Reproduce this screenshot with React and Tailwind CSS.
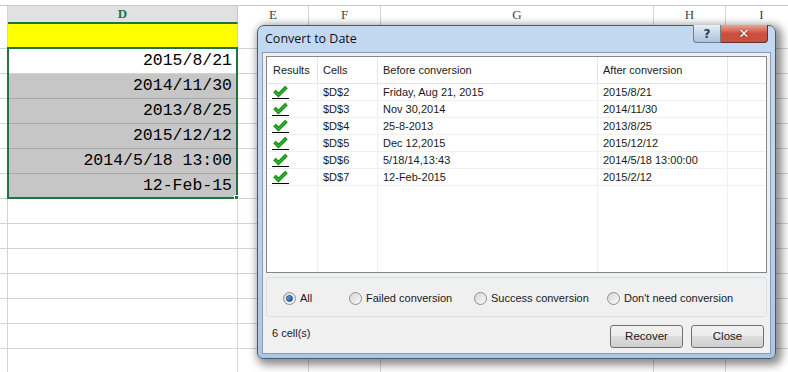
import React from "react";

const cols = [
  { w: "w-[8px]", key: "rh" },
  { w: "w-[230px]", key: "D" },
  { w: "w-[71px]", key: "E" },
  { w: "w-[72px]", key: "F" },
  { w: "w-[273px]", key: "G" },
  { w: "w-[72px]", key: "H" },
  { w: "w-[72px]", key: "I" },
];

const dVals = [
  null,
  "2015/8/21",
  "2014/11/30",
  "2013/8/25",
  "2015/12/12",
  "2014/5/18 13:00",
  "12-Feb-15",
];

const listRows = [
  ["$D$2", "Friday, Aug 21, 2015", "2015/8/21"],
  ["$D$3", "Nov 30,2014", "2014/11/30"],
  ["$D$4", "25-8-2013", "2013/8/25"],
  ["$D$5", "Dec 12,2015", "2015/12/12"],
  ["$D$6", "5/18/14,13:43", "2014/5/18 13:00:00"],
  ["$D$7", "12-Feb-2015", "2015/2/12"],
];

function Check() {
  return (
    <svg width="17" height="15" viewBox="0 0 17 15">
      <polyline points="2.5,6 6.5,10 14.5,2" fill="none" stroke="#0b7a0b" strokeWidth="3.6" strokeLinejoin="miter" />
      <polyline points="2.5,6 6.5,10 14.5,2" fill="none" stroke="#2bbf2b" strokeWidth="1.6" />
      <line x1="0" y1="13.5" x2="17" y2="13.5" stroke="#000" strokeWidth="1" />
    </svg>
  );
}

function Radio({ checked, label }) {
  return (
    <div className="flex items-center gap-[4px]">
      <div className="w-[13px] h-[13px] rounded-full border border-[#8e8f8f] bg-gradient-to-br from-[#d6d6d6] to-[#fbfbfb] flex items-center justify-center">
        {checked && (
          <div className="w-[7px] h-[7px] rounded-full bg-gradient-to-br from-[#6ab4ea] to-[#0d4f8f] border border-[#1c4f7e]" />
        )}
      </div>
      <span>{label}</span>
    </div>
  );
}

function Sheet() {
  const rows = [];
  for (let r = 0; r < 14; r++) {
    rows.push(
      <div key={r} className="flex h-[25px]">
        {cols.map((c, ci) => {
          let cls = `${c.w} shrink-0 h-full border-r border-b border-[#d4d4d4]`;
          let content = null;
          if (c.key === "D" && r === 0) cls = `${c.w} shrink-0 h-full border-r border-b border-[#d4d4d4] bg-[#ffff00]`;
          if (c.key === "D" && r === 1) {
            content = dVals[1];
          }
          if (c.key === "D" && r >= 2 && r <= 6) {
            cls = `${c.w} shrink-0 h-full border-r border-[#d4d4d4] border-b bg-[#c6c6c6]`;
            content = dVals[r];
          }
          if (c.key === "D" && r >= 2 && r <= 5) {
            cls = `${c.w} shrink-0 h-full border-r border-b border-r-[#d4d4d4] border-b-[#a8a8a8] bg-[#c6c6c6]`;
          }
          return (
            <div key={ci} className={cls}>
              {content && (
                <div className="h-full flex items-center justify-end pr-[5px] pt-[1px] text-[16.5px] text-[#000] font-['Liberation_Mono',monospace] whitespace-pre">
                  {content}
                </div>
              )}
            </div>
          );
        })}
      </div>
    );
  }
  return (
    <div className="flex flex-col">
      <div className="h-[5px]" />
      <div className="flex h-[19px] border-t border-[#c8c8c8]">
        {cols.map((c, ci) => (
          <div
            key={ci}
            className={
              c.key === "D"
                ? `${c.w} shrink-0 h-full border-r border-[#c8c8c8] bg-[#e1e1e1] border-b-2 border-b-[#217346] flex items-center justify-center text-[13px] font-bold text-[#217346] font-['Liberation_Serif',serif]`
                : `${c.w} shrink-0 h-full border-r border-[#d4d4d4] flex items-center justify-center text-[13px] text-[#444] font-['Liberation_Serif',serif]`
            }
          >
            {c.key !== "rh" ? c.key : ""}
          </div>
        ))}
      </div>
      {rows}
    </div>
  );
}

function Dialog() {
  return (
    <div className="absolute left-[257px] top-[25px] w-[519px] h-[334px] rounded-t-[7px] rounded-b-[6px] border border-[#4d5a69] bg-gradient-to-b from-[#c3d9f1] via-[#bdd4ee] to-[#a9c6e6] shadow-[3px_3px_9px_3px_rgba(0,0,0,0.45)] flex flex-col px-[4px] pb-[5px]">
      <div className="h-[26px] shrink-0 flex items-start justify-between">
        <div className="pl-[3px] pt-[7px] text-[12.5px] text-[#111] font-['Open_Sans',sans-serif] leading-none">Convert to Date</div>
        <div className="flex mr-[3px] -mt-[1px]">
          <div className="w-[28px] h-[18px] rounded-bl-[4px] border border-[#6d7f95] border-t-0 bg-gradient-to-b from-[#e7eff8] via-[#c8d7e8] to-[#aec3db] flex items-center justify-center text-[12px] font-bold text-[#2e3e53] font-['DejaVu_Sans',sans-serif]">?</div>
          <div className="w-[47px] h-[18px] rounded-br-[4px] border border-[#6b2d25] border-t-0 border-l-0 bg-gradient-to-b from-[#e8a393] via-[#cd4f3d] to-[#c4513f] flex items-center justify-center text-[13px] font-bold text-white font-['DejaVu_Sans',sans-serif] [text-shadow:0_0_2px_#5a1b12]">✕</div>
        </div>
      </div>
      <div className="flex-1 border border-[#8a9cb3] bg-[#f0f0f0] flex flex-col px-[3px] pt-[3px] pb-[5px] text-[11px] text-[#1a1a1a] font-['Liberation_Sans',sans-serif]">
        <div className="h-[217px] border border-[#828790] bg-white flex flex-col overflow-hidden">
          <div className="flex h-[27px] border-b border-[#e5e5e5] shrink-0">
            <div className="w-[51px] border-r border-[#e5e5e5] pl-[6px] flex items-center">Results</div>
            <div className="w-[60px] border-r border-[#e5e5e5] pl-[5px] flex items-center">Cells</div>
            <div className="w-[220px] border-r border-[#e5e5e5] pl-[5px] flex items-center">Before conversion</div>
            <div className="w-[130px] border-r border-[#e5e5e5] pl-[5px] flex items-center">After conversion</div>
            <div className="flex-1" />
          </div>
          {listRows.map((r, i) => (
            <div key={i} className="flex h-[17px] border-b border-[#f0f0f0] shrink-0">
              <div className="w-[51px] border-r border-[#f0f0f0] pl-[5px] flex items-center">
                <Check />
              </div>
              <div className="w-[60px] border-r border-[#f0f0f0] pl-[5px] flex items-center">{r[0]}</div>
              <div className="w-[220px] border-r border-[#f0f0f0] pl-[5px] flex items-center">{r[1]}</div>
              <div className="w-[130px] border-r border-[#f0f0f0] pl-[5px] flex items-center">{r[2]}</div>
              <div className="flex-1" />
            </div>
          ))}
          <div className="flex flex-1">
            <div className="w-[51px] border-r border-[#f0f0f0]" />
            <div className="w-[60px] border-r border-[#f0f0f0]" />
            <div className="w-[220px] border-r border-[#f0f0f0]" />
            <div className="w-[130px] border-r border-[#f0f0f0]" />
            <div className="flex-1" />
          </div>
        </div>
        <div className="mt-[4px] h-[40px] border border-[#d5dfe5] rounded-[3px] flex items-center pl-[16px] pt-[3px]">
          <div className="w-[66px]"><Radio checked label="All" /></div>
          <div className="w-[125px]"><Radio label="Failed conversion" /></div>
          <div className="w-[133px]"><Radio label="Success conversion" /></div>
          <div><Radio label="Don't need conversion" /></div>
        </div>
        <div className="flex items-start mt-[8px]">
          <div className="pl-[6px] flex-1">6 cell(s)</div>
          <div className="flex gap-[8px] mr-[3px]">
            <div className="w-[73px] h-[23px] rounded-[3px] border border-[#707070] bg-[linear-gradient(#f2f2f2_0%,#ebebeb_50%,#dddddd_50%,#cfcfcf_100%)] flex items-center justify-center text-[11.5px]">Recover</div>
            <div className="w-[73px] h-[23px] rounded-[3px] border border-[#707070] bg-[linear-gradient(#f2f2f2_0%,#ebebeb_50%,#dddddd_50%,#cfcfcf_100%)] flex items-center justify-center text-[11.5px]">Close</div>
          </div>
        </div>
      </div>
    </div>
  );
}

export default function App() {
  return (
    <div className="relative w-[788px] h-[372px] overflow-hidden bg-white">
      <Sheet />
      <div className="absolute left-[7px] top-[47px] w-[231px] h-[152px] border-2 border-[#217346]" />
      <div className="absolute left-[234px] top-[195px] w-[5px] h-[5px] bg-[#217346] border border-white" />
      <Dialog />
    </div>
  );
}
